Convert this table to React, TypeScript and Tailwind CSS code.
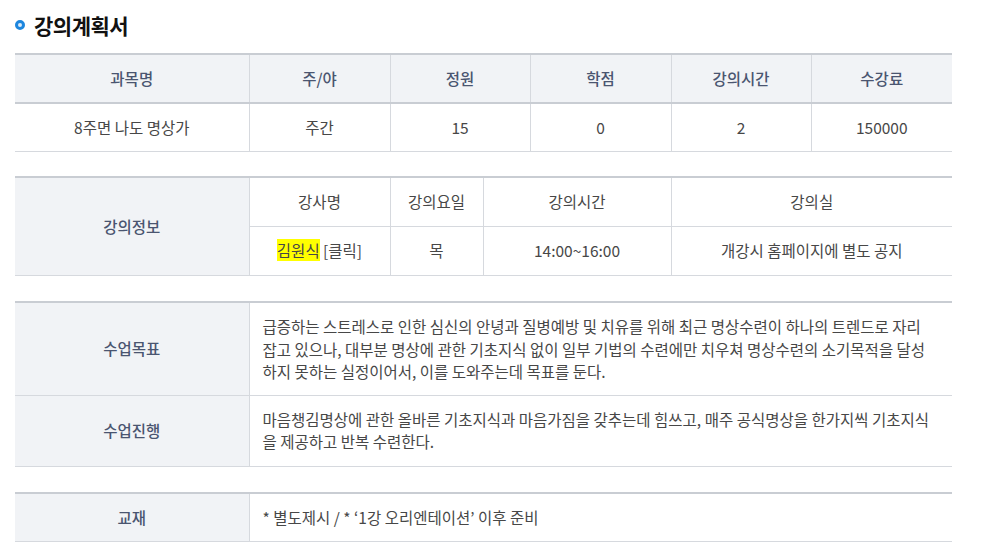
import * as React from "react";

const font = {
  fontFamily: '"Noto Sans CJK KR", "Noto Sans", sans-serif',
};

const headCell =
  "border border-[#d6d9de] bg-[#f1f3f6] text-center align-middle font-medium text-[#4a5570]";
const bodyCell =
  "border border-[#d6d9de] bg-white text-center align-middle text-[#474747]";

function Title() {
  return (
    <div className="flex items-center gap-[9px] pt-[11px] pb-[14px]">
      <span className="block size-[10px] rounded-full border-[3px] border-[#1d86de] bg-[#dcebfa]" />
      <h2 className="text-[21px] font-bold leading-[28px] tracking-[-0.5px] text-[#111]">
        강의계획서
      </h2>
    </div>
  );
}

function CourseSummary() {
  const heads = ["과목명", "주/야", "정원", "학점", "강의시간", "수강료"];
  const values = ["8주면 나도 명상가", "주간", "15", "0", "2", "150000"];
  return (
    <table className="w-[937px] table-fixed border-collapse">
      <colgroup>
        <col className="w-[234px]" />
        <col className="w-[141px]" />
        <col className="w-[140px]" />
        <col className="w-[141px]" />
        <col className="w-[140px]" />
        <col className="w-[141px]" />
      </colgroup>
      <thead>
        <tr>
          {heads.map((h, i) => (
            <th
              key={h}
              className={`${headCell} h-[49px] border-t-2 border-t-[#c9cdd3] border-b-2 border-b-[#c9cdd3] ${
                i === 0 ? "border-l-0" : ""
              } ${i === heads.length - 1 ? "border-r-0" : ""}`}
            >
              {h}
            </th>
          ))}
        </tr>
      </thead>
      <tbody>
        <tr>
          {values.map((v, i) => (
            <td
              key={i}
              className={`${bodyCell} h-[48px] ${i === 0 ? "border-l-0" : ""} ${
                i === values.length - 1 ? "border-r-0" : ""
              }`}
            >
              {v}
            </td>
          ))}
        </tr>
      </tbody>
    </table>
  );
}

function LectureInfo() {
  return (
    <table className="w-[937px] table-fixed border-collapse">
      <colgroup>
        <col className="w-[234px]" />
        <col className="w-[141px]" />
        <col className="w-[93px]" />
        <col className="w-[188px]" />
        <col className="w-[281px]" />
      </colgroup>
      <tbody>
        <tr>
          <th
            rowSpan={2}
            className={`${headCell} border-l-0 border-t-2 border-t-[#c9cdd3]`}
          >
            강의정보
          </th>
          {["강사명", "강의요일", "강의시간", "강의실"].map((h, i) => (
            <td
              key={h}
              className={`${bodyCell} h-[50px] border-t-2 border-t-[#c9cdd3] ${
                i === 3 ? "border-r-0" : ""
              }`}
            >
              {h}
            </td>
          ))}
        </tr>
        <tr>
          <td className={`${bodyCell} h-[49px]`}>
            <span className="bg-[#ffff00]">김원식</span> [클릭]
          </td>
          <td className={`${bodyCell} h-[49px]`}>목</td>
          <td className={`${bodyCell} h-[49px]`}>14:00~16:00</td>
          <td className={`${bodyCell} h-[49px] border-r-0`}>
            개강시 홈페이지에 별도 공지
          </td>
        </tr>
      </tbody>
    </table>
  );
}

type TextRow = { label: string; text: string; pad?: string };

function TextRows({ rows }: { rows: TextRow[] }) {
  return (
    <table className="w-[937px] table-fixed border-collapse">
      <colgroup>
        <col className="w-[234px]" />
        <col className="w-[703px]" />
      </colgroup>
      <tbody>
        {rows.map((r, i) => (
          <tr key={r.label}>
            <th
              className={`${headCell} h-[49px] border-l-0 ${
                i === 0 ? "border-t-2 border-t-[#c9cdd3]" : ""
              }`}
            >
              {r.label}
            </th>
            <td
              className={`h-[49px] border border-r-0 border-[#d6d9de] px-[13px] text-left align-middle leading-[22.5px] break-keep text-[#474747] ${
                r.pad ?? "py-[12px]"
              } ${i === 0 ? "border-t-2 border-t-[#c9cdd3]" : ""}`}
            >
              {r.text}
            </td>
          </tr>
        ))}
      </tbody>
    </table>
  );
}

export default function App() {
  return (
    <div
      className="min-h-[548px] w-[981px] bg-white px-[15px] text-[15.5px]"
      style={font}
    >
      <Title />
      <CourseSummary />
      <div className="h-[24px]" />
      <LectureInfo />
      <div className="h-[25px]" />
      <TextRows
        rows={[
          {
            label: "수업목표",
            text: "급증하는 스트레스로 인한 심신의 안녕과 질병예방 및 치유를 위해 최근 명상수련이 하나의 트렌드로 자리 잡고 있으나, 대부분 명상에 관한 기초지식 없이 일부 기법의 수련에만 치우쳐 명상수련의 소기목적을 달성 하지 못하는 실정이어서, 이를 도와주는데 목표를 둔다.",
          },
          {
            label: "수업진행",
            text: "마음챙김명상에 관한 올바른 기초지식과 마음가짐을 갖추는데 힘쓰고, 매주 공식명상을 한가지씩 기초지식 을 제공하고 반복 수련한다.",
            pad: "pt-[12px] pb-[13px]",
          },
        ]}
      />
      <div className="h-[25px]" />
      <TextRows
        rows={[{ label: "교재", text: "* 별도제시 / * ‘1강 오리엔테이션’ 이후 준비" }]}
      />
    </div>
  );
}
